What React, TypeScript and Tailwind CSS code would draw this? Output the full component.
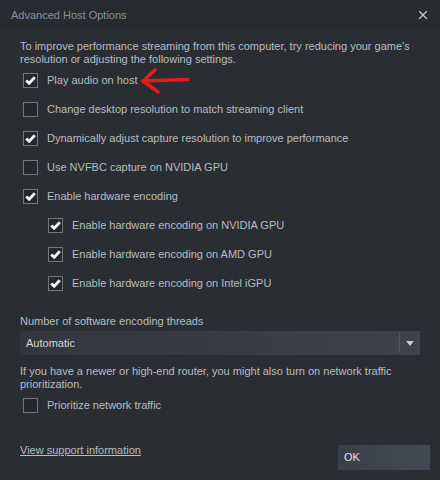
import { X } from 'lucide-react';

const font = { fontFamily: '"Liberation Sans", Arial, sans-serif' };

function Check({ checked }: { checked: boolean }) {
  return (
    <div className="w-[15px] h-[15px] border border-[#74787e] bg-[#24272c] flex items-center justify-center shrink-0">
      {checked && (
        <svg width="11" height="9" viewBox="0 0 11 9">
          <path d="M1.2 4.4 L4.2 7.3 L9.8 1.3" fill="none" stroke="#f2f2f2" strokeWidth="2.8" strokeLinejoin="miter" />
        </svg>
      )}
    </div>
  );
}

function Row({ label, checked, sub, children }: { label: string; checked: boolean; sub?: boolean; children?: React.ReactNode }) {
  return (
    <div className={`relative h-[29px] flex items-center gap-[9px] ${sub ? 'pl-[48px]' : 'pl-[23px]'}`}>
      <Check checked={checked} />
      <span>{label}</span>
      {children}
    </div>
  );
}

export default function App() {
  return (
    <div className="w-[440px] h-[480px] bg-[#2a2d32] text-[#b9bdc1] text-[11px] leading-[13px] flex flex-col overflow-hidden" style={font}>
      {/* Title bar */}
      <div className="h-[30px] flex items-center justify-between pl-[11px] pr-[10px] bg-[#272a2f]">
        <span className="text-[#8a929b] text-[11px]">Advanced Host Options</span>
        <X className="w-[14px] h-[14px] text-[#c9cbcd]" strokeWidth={2} />
      </div>

      <div className="flex flex-col pt-[10px]">
        <p className="px-[20px]">
          To improve performance streaming from this computer, try reducing your game's resolution or adjusting the following settings.
        </p>

        <Row label="Play audio on host" checked>
          <svg className="absolute left-[138px] top-[0px]" width="56" height="30" viewBox="0 0 56 30">
            <path d="M5 15 L50 13.5" stroke="#e31b1b" strokeWidth="3.6" strokeLinecap="round" fill="none" />
            <path d="M17 4 L5 15 L20 26" stroke="#e31b1b" strokeWidth="3.6" strokeLinecap="round" strokeLinejoin="round" fill="none" />
          </svg>
        </Row>
        <Row label="Change desktop resolution to match streaming client" checked={false} />
        <Row label="Dynamically adjust capture resolution to improve performance" checked />
        <Row label="Use NVFBC capture on NVIDIA GPU" checked={false} />
        <Row label="Enable hardware encoding" checked />
        <Row label="Enable hardware encoding on NVIDIA GPU" checked sub />
        <Row label="Enable hardware encoding on AMD GPU" checked sub />
        <Row label="Enable hardware encoding on Intel iGPU" checked sub />

        <div className="px-[20px] pt-[17px]">
          <div>Number of software encoding threads</div>
          <div className="mt-[3px] h-[24px] flex items-center bg-gradient-to-r from-[#33363d] to-[#3e424b] text-[#d6d8da]">
            <span className="flex-1 pl-[6px]">Automatic</span>
            <div className="w-px h-[20px] bg-[#4d5468]" />
            <svg className="mx-[6px]" width="8" height="5" viewBox="0 0 8 5">
              <path d="M0 0 H8 L4 5 Z" fill="#c8cacc" />
            </svg>
          </div>
        </div>

        <p className="px-[20px] pt-[10px]">
          If you have a newer or high-end router, you might also turn on network traffic prioritization.
        </p>
        <Row label="Prioritize network traffic" checked={false} />

        <div className="flex justify-between items-start pl-[20px] pr-[10px] pt-[25px]">
          <a className="underline text-[#b9bdc1] -mt-[1px]">View support information</a>
          <button className="w-[92px] h-[25px] bg-gradient-to-r from-[#3a3f48] to-[#444a55] text-[#e2e4e6] text-left pl-[6px] text-[11px]" style={font}>
            OK
          </button>
        </div>
      </div>
    </div>
  );
}
